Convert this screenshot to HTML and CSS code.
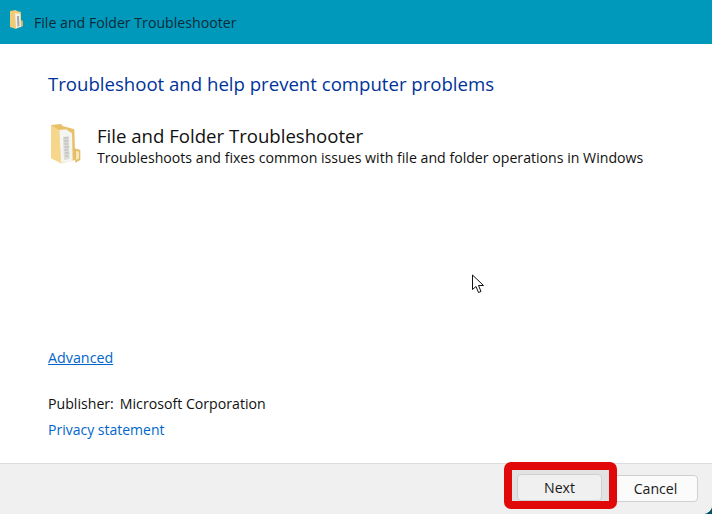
FILE: index.html
```html
<!DOCTYPE html>
<html lang="en">
<head>
  <meta charset="UTF-8">
  <title>File and Folder Troubleshooter</title>
  <link rel="stylesheet" href="styles.css">
</head>
<body>
  <div class="window">
    <div class="titlebar">
      <svg class="title-icon" width="14" height="19" viewBox="0 0 14 19">
        <path d="M0 1 L6 0 L7 1 L11 2 L11 16 L6 19 L0 17 Z" fill="#efcb78"/>
        <path d="M5 3 L10 4 L11 17 L6 18 Z" fill="#f0f0ec"/>
        <path d="M7 6 L9 6 L9.5 16 L7.5 17 Z" fill="#a5a8a6"/>
        <path d="M11 10 L13 11 L13 16 L11 17 Z" fill="#d8b467"/>
      </svg>
      <span class="title-text">File and Folder Troubleshooter</span>
    </div>

    <div class="content">
      <h1 class="heading">Troubleshoot and help prevent computer problems</h1>

      <div class="item">
        <svg class="item-icon" width="36" height="40" viewBox="0 0 36 40">
          <path d="M0 1 L10 0 L11.7 2 L23.3 5.3 L24.3 36 L10 39.3 Z" fill="#e9c06a"/>
          <path d="M0 1 L8.3 6 L10 39.3 L0 34.3 Z" fill="#f5d68a"/>
          <path d="M8.3 6 L15 5.3 L21 9.3 L21.7 37.7 L10 38.7 Z" fill="#f4f4f1"/>
          <path d="M12 13 L18 12 L18.5 35 L13 36 Z" fill="#dcdcd9"/>
          <path d="M13 14 H17 M13 17 H17.5 M13.5 20 H17 M13.5 23 H18 M13.5 26 H17 M14 29 H18 M14 32 H17.5" stroke="#b5b5b2" stroke-width="1"/>
          <path d="M23.3 24.3 L29.3 26 L29.3 36 L24.3 38.7 Z" fill="#e3bc66"/>
          <path d="M25 27 L28 27.5 L28 34.5 L25 36 Z" fill="#f6e6bb"/>
        </svg>
        <div class="item-text">
          <div class="item-title">File and Folder Troubleshooter</div>
          <div class="item-desc">Troubleshoots and fixes common issues with file and folder operations in Windows</div>
        </div>
      </div>

      <svg class="cursor" width="14" height="20" viewBox="0 0 14 20">
        <path d="M1.5 1 L1.5 15.5 L5 12.5 L7.5 18.5 L10 17.5 L7.5 11.5 L12.5 11.5 Z" fill="#fff" stroke="#111" stroke-width="1"/>
      </svg>

      <div class="links">
        <a class="link advanced" href="#">Advanced</a>
        <div class="publisher"><span class="publisher-label">Publisher:</span>Microsoft Corporation</div>
        <a class="link privacy" href="#">Privacy statement</a>
      </div>
    </div>

    <div class="footer">
      <div class="next-highlight">
        <button class="btn">Next</button>
      </div>
      <button class="btn btn-cancel">Cancel</button>
    </div>
  </div>
</body>
</html>
```

FILE: styles.css
```css
/* General Styles */
html, body {
  margin: 0;
  padding: 0;
}

body {
  width: 712px;
  height: 514px;
  overflow: hidden;
  background: #04506a; /* desktop showing behind the rounded corner */
  font-family: "Open Sans", "Noto Sans", sans-serif;
  color: #1a1a1a;
}

.window {
  display: flex;
  flex-direction: column;
  height: 514px;
  background: #fff;
  border-bottom-right-radius: 9px;
  overflow: hidden;
}

/* Title bar */
.titlebar {
  height: 44px;
  background: #0099bc;
  display: flex;
  align-items: center;
  padding-left: 10px;
  box-sizing: border-box;
}

.title-icon {
  margin-right: 10px;
  margin-top: -5px;
}

.title-text {
  font-size: 14.15px;
  color: #0c2a38;
}

/* Main area */
.content {
  position: relative;
  flex: 1;
  padding: 0 48px;
  display: flex;
  flex-direction: column;
}

.heading {
  font-size: 18.6px;
  font-weight: 400;
  color: #003399;
  margin: 27px 0 0;
  line-height: 26px;
}

.item {
  display: flex;
  margin-top: 26px;
}

.item-icon {
  flex: none;
  margin: 1px 10px 0 3px;
}

.item-title {
  font-size: 18.6px;
  line-height: 26px;
  color: #111;
}

.item-desc {
  font-size: 14.15px;
  line-height: 18px;
  color: #111;
}

.cursor {
  position: absolute;
  left: 471px;
  top: 230px;
}

.links {
  margin-top: auto;
  padding-bottom: 23px;
  display: flex;
  flex-direction: column;
  align-items: flex-start;
  font-size: 14.15px;
  line-height: 20px;
}

.link {
  color: #0066cc;
  text-decoration: none;
}

.advanced {
  font-size: 14.3px;
  text-decoration: underline;
}

.publisher {
  margin-top: 26px;
  color: #111;
}

.publisher-label {
  margin-right: 6px;
}

.privacy {
  margin-top: 6px;
  font-size: 14px;
}

/* Footer */
.footer {
  height: 51px;
  background: #f0f0f0;
  border-top: 1px solid #dcdcdc;
  box-sizing: border-box;
  display: flex;
  align-items: flex-start;
  justify-content: flex-end;
  padding: 0 14px 0 0;
  position: relative;
}

.btn {
  width: 85px;
  height: 27px;
  margin-top: 11px;
  background: #fbfbfb;
  border: 1px solid #d0d0d0;
  border-radius: 4px;
  font-family: inherit;
  font-size: 14.15px;
  color: #1a1a1a;
  padding: 0;
}

.next-highlight {
  position: absolute;
  right: 95px;
  top: -2px;
  width: 113px;
  height: 47px;
  box-sizing: border-box;
  border: 8px solid #e00808;
  border-radius: 7px;
  background: #e2e2e2;
}

.next-highlight .btn {
  display: block;
  margin: 4px 0 0 5px;
  background: #f0f0f0;
}
```
